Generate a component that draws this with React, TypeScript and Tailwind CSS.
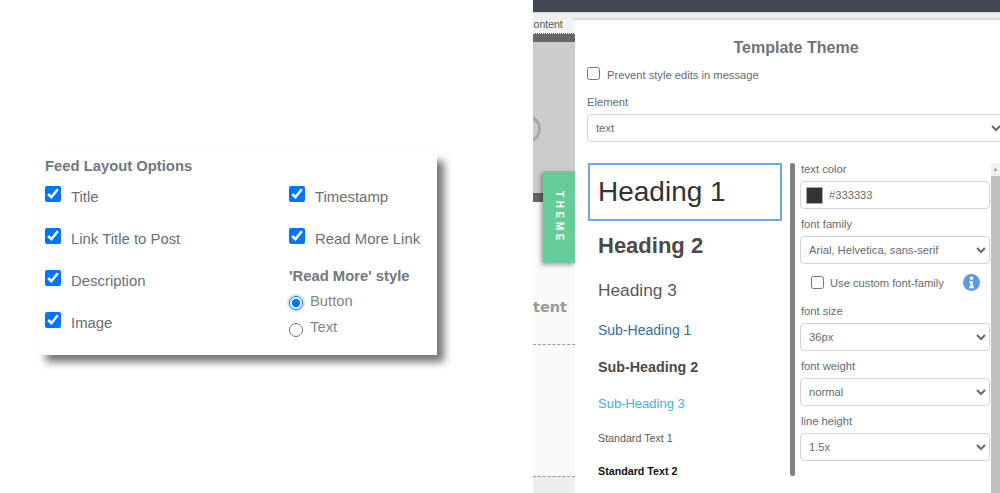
import { ReactNode } from 'react'

const font = { arial: 'font-["Liberation_Sans",Arial,sans-serif]' }

function FeedCheck({ label }: { label: string }) {
  return (
    <label className="flex h-[16px] items-center gap-[10px] text-[14.9px] text-[#6b6f78]">
      <input type="checkbox" defaultChecked className="m-0 h-4 w-4" />
      <span className="relative top-[3px] whitespace-nowrap">{label}</span>
    </label>
  )
}

function Radio({ label, checked }: { label: string; checked?: boolean }) {
  return (
    <label className="flex h-[16px] items-center gap-[7px] text-[14.8px] text-[#82858c]">
      <span
        className={`relative flex rounded-full ${checked ? 'top-[1px] shadow-[0_0_0_2px_rgba(0,117,255,0.2)]' : 'top-[2px]'}`}
      >
        <input type="radio" name="read-more" defaultChecked={checked} className="m-0 h-[14px] w-[14px]" />
      </span>
      <span className="relative -top-[1px]">{label}</span>
    </label>
  )
}

function FeedCard() {
  return (
    <div className="ml-[37px] mt-[152px] flex h-[203px] w-[400px] bg-white pl-[8px] pt-[6px] shadow-[8px_8px_8px_-1px_rgba(0,0,0,0.55)]">
      <div className="w-[244px]">
        <h3 className="text-[14.8px] leading-[16px] font-bold text-[#74777f]">Feed Layout Options</h3>
        <div className="mt-[12px] flex flex-col gap-[26px]">
          <FeedCheck label="Title" />
          <FeedCheck label="Link Title to Post" />
          <FeedCheck label="Description" />
          <FeedCheck label="Image" />
        </div>
      </div>
      <div className="pt-[28px]">
        <div className="flex flex-col gap-[26px]">
          <FeedCheck label="Timestamp" />
          <FeedCheck label="Read More Link" />
        </div>
        <h3 className="mt-[24px] text-[14.8px] leading-[16px] font-bold whitespace-nowrap text-[#74777f]">'Read More' style</h3>
        <div className="mt-[10px] flex flex-col gap-[10px]">
          <Radio label="Button" checked />
          <Radio label="Text" />
        </div>
      </div>
    </div>
  )
}

// the editor page showing behind the theme drawer
function Backdrop() {
  return (
    <div className="relative flex w-[42px] shrink-0 flex-col">
      <div className="h-[13px] overflow-hidden bg-[#f4f4f4] text-[10.5px] leading-[9px] text-[#555]">
        <span className="relative -left-[7px]">Content</span>
      </div>
      <div className="h-[9px] border-t border-dotted border-white bg-[#666666]" />
      <div className="flex h-[151px] items-center bg-[#cccccc] pt-[23px]">
        <div className="relative -left-[24px] h-[28px] w-[32px] rounded-full border-[3px] border-[#a8a8a8]" />
      </div>
      <div className="h-[9px] bg-[#666666]" />
      <div className="h-[142px] bg-[#fafafa] pt-[95px] font-['DejaVu_Sans',sans-serif] text-[14.5px] leading-[20px] font-bold whitespace-nowrap text-[#999999]">
        tent
      </div>
      <div className="h-[132px] border-t border-dashed border-[#999999] bg-[#fafafa]" />
      <div className="flex-1 border-t border-dashed border-[#999999] bg-[#eeeeee]" />
      {/* THEME pull tab */}
      <div className="absolute top-[151px] left-[10px] flex h-[92px] w-[32px] items-center justify-center rounded-l-[3px] bg-[#66cc99] shadow-[-2px_2px_4px_rgba(0,0,0,0.35)]">
        <span className="text-[10px] leading-none font-bold tracking-[3.6px] text-white [writing-mode:vertical-rl]">THEME</span>
      </div>
    </div>
  )
}

function Field({ label, children }: { label: string; children: ReactNode }) {
  return (
    <div>
      <div className="h-[18px] pl-[1px] text-[11.2px] leading-[12px] text-[#666a73]">{label}</div>
      {children}
    </div>
  )
}

function Select({ value }: { value: string }) {
  return (
    <select
      defaultValue={value}
      className="block h-[28px] w-full rounded-[4px] border border-[#d4d4d4] bg-white pl-[4px] text-[11.2px] text-[#666a73]"
    >
      <option>{value}</option>
    </select>
  )
}

function HeadingList() {
  return (
    <div className="ml-[1px] w-[194px] shrink-0">
      <div className="flex h-[58px] items-center border-2 border-[#6aa9ea] pl-[8px] text-[28px] text-[#333333]">Heading 1</div>
      <div className="flex flex-col pl-[10px]">
        <div className="mt-[12px] h-[26px] text-[22px] leading-[26px] font-bold text-[#4a4a4a]">Heading 2</div>
        <div className="mt-[21px] h-[20px] text-[17.3px] leading-[20px] text-[#5a5a5a]">Heading 3</div>
        <div className="mt-[21px] h-[18px] text-[14px] leading-[18px] text-[#2f6f9f]">Sub-Heading 1</div>
        <div className="mt-[19px] h-[18px] text-[14.3px] leading-[18px] font-bold text-[#4a4a4a]">Sub-Heading 2</div>
        <div className="mt-[19px] h-[18px] text-[13px] leading-[18px] text-[#3fb4d8]">Sub-Heading 3</div>
        <div className="mt-[17px] h-[16px] text-[10.7px] leading-[16px] text-[#5a5a5a]">Standard Text 1</div>
        <div className="mt-[17px] h-[16px] text-[10.7px] leading-[16px] font-bold text-[#111111]">Standard Text 2</div>
      </div>
    </div>
  )
}

function StylePanel() {
  return (
    <div className="flex flex-1">
      <div className="ml-[8px] h-[313px] w-[5px] rounded-[2px] bg-[#808080]" />
      <div className="ml-[5px] flex w-[190px] flex-col gap-[9px]">
        <Field label="text color">
          <div className="flex h-[28px] items-center rounded-[4px] border border-[#d4d4d4] pl-[5px]">
            <div className="h-[17px] w-[17px] border border-[#aaaaaa] bg-[#333333]" />
            <span className="ml-[6px] text-[11.2px] text-[#666a73]">#333333</span>
          </div>
        </Field>
        <div className="pb-[7px]">
          <Field label="font family">
            <Select value="Arial, Helvetica, sans-serif" />
          </Field>
          <div className="mt-[11px] flex h-[14px] items-center pl-[11px] text-[11.2px] text-[#666a73]">
            <input type="checkbox" className="m-0 h-[13px] w-[13px]" />
            <span className="relative top-[1px] ml-[6px]">Use custom font-family</span>
            <svg viewBox="0 0 16 16" className="ml-[19px] h-[17px] w-[17px]">
              <circle cx="8" cy="8" r="8" fill="#5b9be6" />
              <circle cx="8" cy="4" r="1.6" fill="#fff" />
              <path d="M5.8 6.6h3.4v5.2h1.1v1.5H5.8v-1.5h1.1V8.1H5.8z" fill="#fff" />
            </svg>
          </div>
        </div>
        <Field label="font size">
          <Select value="36px" />
        </Field>
        <Field label="font weight">
          <Select value="normal" />
        </Field>
        <Field label="line height">
          <Select value="1.5x" />
        </Field>
      </div>
      <div className="ml-[1px] flex w-[9px] shrink-0 flex-col bg-[#f1f1f1]">
        <div className="h-[13px] text-center text-[6px] leading-[13px] text-[#a0a0a0]">▲</div>
        <div className="flex-1 bg-[#c1c1c1]" />
      </div>
    </div>
  )
}

function ThemeDrawer() {
  return (
    <div className="h-[473px] w-[442px] shrink-0 bg-white pr-[12px] pl-[12px] shadow-[-2px_0_3px_rgba(0,0,0,0.3)]">
      <h2 className="pt-[19px] text-center text-[16px] leading-[18px] font-bold text-[#6f727a]">Template Theme</h2>
      <label className="mt-[10px] flex h-[13px] items-center text-[11.2px] text-[#666a73]">
        <input type="checkbox" className="m-0 h-[13px] w-[13px]" />
        <span className="relative top-[2px] ml-[7px]">Prevent style edits in message</span>
      </label>
      <div className="mt-[15px] text-[11.2px] leading-[14px] text-[#666a73]">Element</div>
      <div className="mt-[5px] w-[418px]">
        <Select value="text" />
      </div>
      <div className="mt-[21px] flex h-[330px] w-[430px]">
        <HeadingList />
        <StylePanel />
      </div>
    </div>
  )
}

export default function App() {
  return (
    <div className={`flex h-[493px] w-[1000px] overflow-hidden bg-white ${font.arial}`}>
      <div className="w-[533px] shrink-0">
        <FeedCard />
      </div>
      <div className="flex flex-1 flex-col overflow-hidden">
        <div className="h-[12px] shrink-0 bg-[#434654]" />
        <div className="h-[8px] shrink-0 border-t border-[#d8d8d8] bg-[#eeeeee]" />
        <div className="flex flex-1">
          <Backdrop />
          <ThemeDrawer />
        </div>
      </div>
    </div>
  )
}
